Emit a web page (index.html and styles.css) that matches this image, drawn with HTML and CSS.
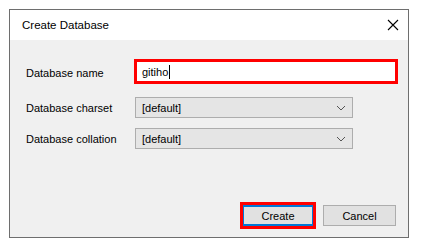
FILE: index.html
```html
<!DOCTYPE html>
<html lang="en">
<head>
    <meta charset="UTF-8">
    <title>Create Database</title>
    <link rel="stylesheet" href="styles.css">
</head>
<body>
    <div class="dialog">
        <div class="titlebar">
            <span class="title">Create Database</span>
            <svg class="close" width="12" height="12" viewBox="0 0 12 12">
                <path d="M1 1 L11 11 M11 1 L1 11" stroke="#000" stroke-width="1.1" fill="none"/>
            </svg>
        </div>
        <div class="content">
            <div class="form">
                <label>Database name</label>
                <div class="name-box">gitiho<span class="caret"></span></div>

                <label>Database charset</label>
                <div class="select">
                    <span>[default]</span>
                    <svg width="10" height="6" viewBox="0 0 10 6"><path d="M1 1 L5 5 L9 1" stroke="#555" fill="none"/></svg>
                </div>

                <label>Database collation</label>
                <div class="select">
                    <span>[default]</span>
                    <svg width="10" height="6" viewBox="0 0 10 6"><path d="M1 1 L5 5 L9 1" stroke="#555" fill="none"/></svg>
                </div>
            </div>
            <div class="footer">
                <div class="highlight"><button class="btn btn-default">Create</button></div>
                <button class="btn">Cancel</button>
            </div>
        </div>
    </div>
</body>
</html>
```

FILE: styles.css
```css
body {
    margin: 0;
    background: #fff;
    font-family: "Liberation Sans", Arial, sans-serif;
    font-size: 11px;
    color: #000;
}

.dialog {
    margin: 9px 0 0 9px;
    width: 398px;
    border: 1px solid #6e6e6e;
    background: #f0f0f0;
}

.titlebar {
    height: 30px;
    background: #fff;
    display: flex;
    align-items: center;
    justify-content: space-between;
    padding: 0 9px 0 12px;
}

.title {
    font-size: 11.5px;
}

.content {
    height: 197px;
    display: flex;
    flex-direction: column;
    padding: 19px 10px 8px 16px;
    box-sizing: border-box;
}

.form {
    display: grid;
    grid-template-columns: 108px 1fr;
    align-items: center;
    row-gap: 10px;
}

.form label {
    line-height: 16px;
}

.name-box {
    height: 25px;
    box-sizing: border-box;
    border: 3px solid #f00;
    background: #fff;
    padding: 0 0 0 5px;
    display: flex;
    align-items: center;
    margin-bottom: 3px;
}

.caret {
    display: inline-block;
    width: 1px;
    height: 14px;
    background: #000;
    margin-left: 1px;
}

.select {
    width: 218px;
    height: 21px;
    box-sizing: border-box;
    margin-left: 1px;
    border: 1px solid #adadad;
    background: #e5e5e5;
    display: flex;
    align-items: center;
    justify-content: space-between;
    padding: 0 6px 0 6px;
}

.footer {
    margin-top: auto;
    display: flex;
    justify-content: flex-end;
    align-items: center;
    gap: 7px;
    padding-right: 2px;
}

.highlight {
    border: 3px solid #f00;
}

.btn {
    width: 73px;
    height: 21px;
    box-sizing: border-box;
    border: 1px solid #adadad;
    background: #e1e1e1;
    font-family: inherit;
    font-size: 11px;
    padding: 0;
    color: #000;
}

.btn-default {
    width: 70px;
    display: block;
    border: 2px solid #0078d7;
    border-left-width: 1px;
    border-right-width: 1px;
}
```
